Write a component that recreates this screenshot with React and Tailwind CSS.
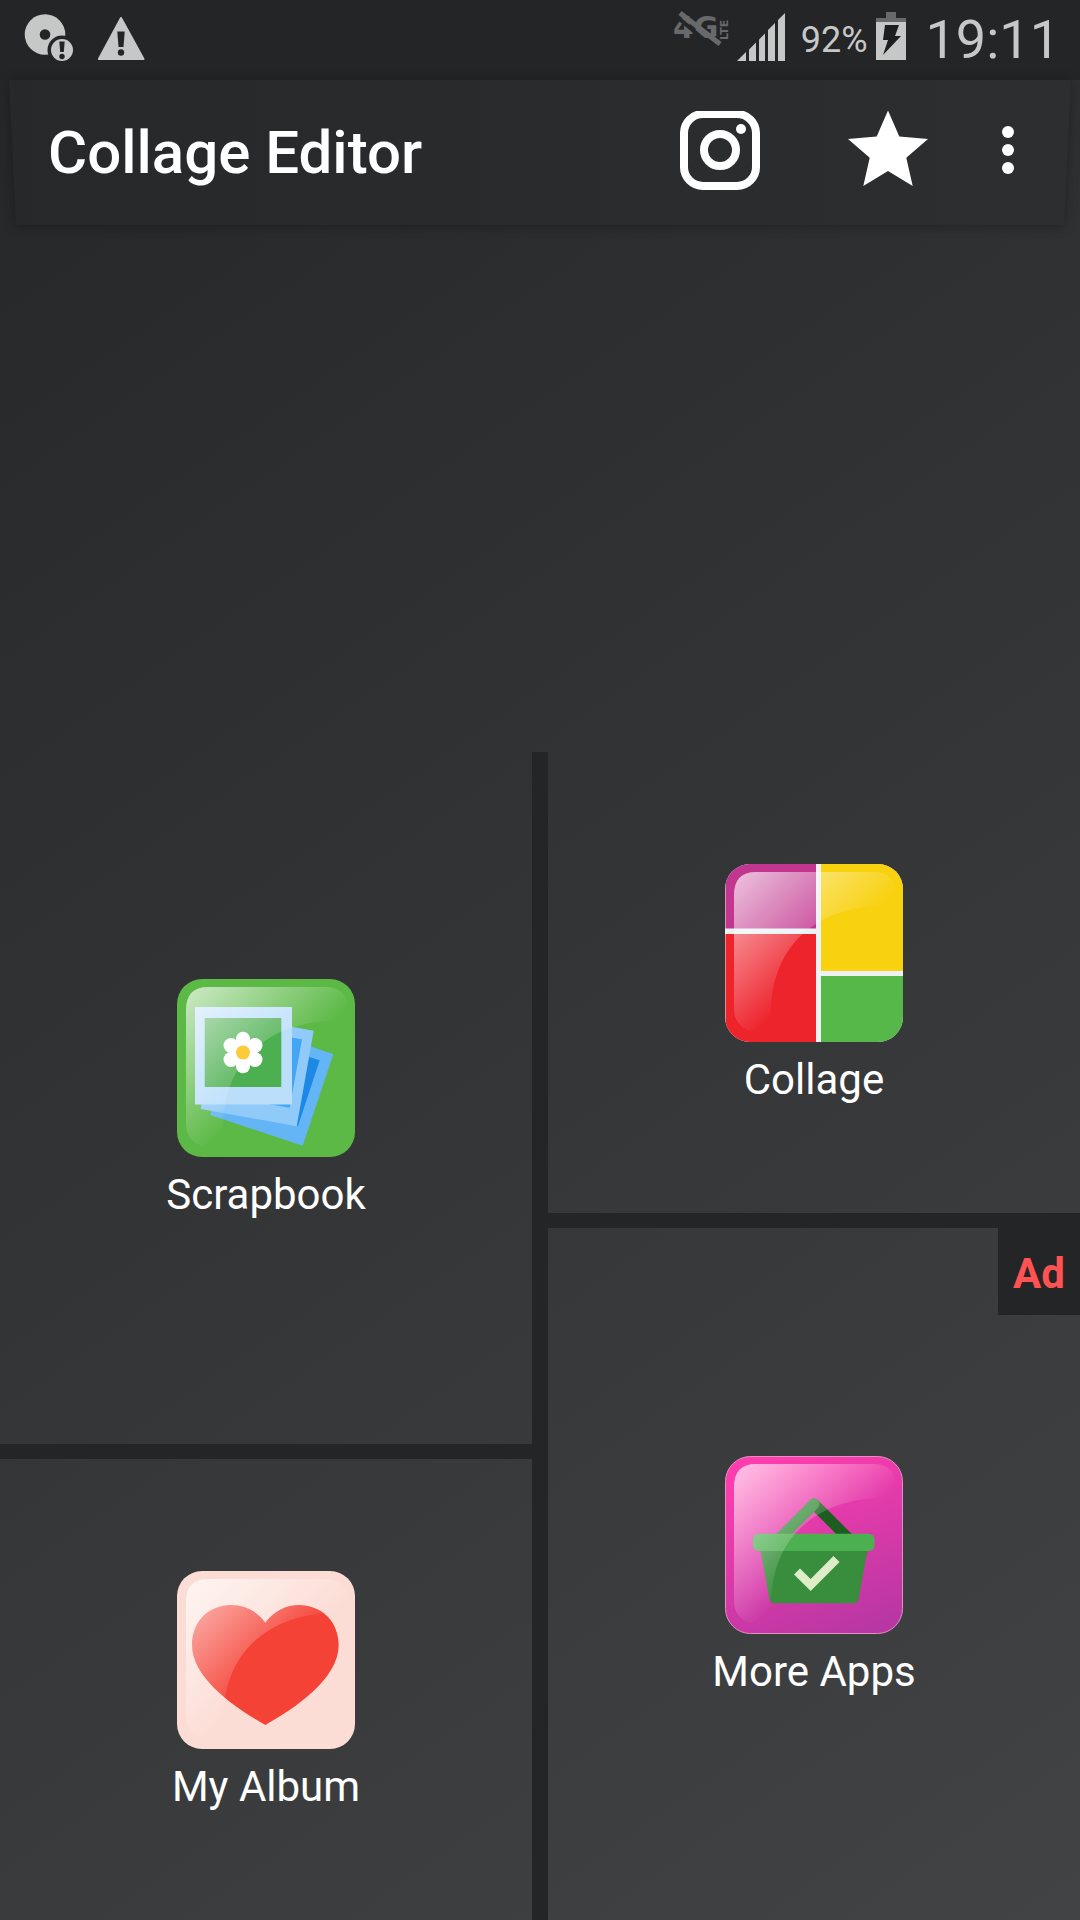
import React from 'react'

// shared glass highlight that sits over every launcher icon
const Gloss = ({ id }) => {
  return (
    <>
      <defs>
        <linearGradient id={id} gradientUnits="userSpaceOnUse" x1="9" y1="8" x2="100" y2="100">
          <stop offset="0" stopColor="#fff" stopOpacity="0.7" />
          <stop offset="1" stopColor="#fff" stopOpacity="0" />
        </linearGradient>
      </defs>
      <path
        d="M31 8H148Q171 8 171 31V42C100 38 46 75 46 150Q38 161 27 168Q9 162 9 145V31Q9 8 31 8Z"
        fill={`url(#${id})`}
      />
    </>
  )
}

const ScrapbookIcon = () => (
  <svg className="size-[178px]" viewBox="0 0 178 178">
    <rect width="178" height="178" rx="25" fill="#5cb946" />
    <path d="M134 67.500L156.300 75.300L125.700 166.700L33.300 136L60 50Z" fill="#64b5f6" />
    <path d="M110 71L142.700 81.300L121 147L90 138Z" fill="#1e88e5" />
    <path d="M40 34L136.700 51.700L119.700 147.300L23.700 130Z" fill="#90caf9" />
    <path d="M100 56L125 60.300L112.700 128.700L80 123Z" fill="#42a5f5" />
    <rect x="18" y="28" width="97" height="97.500" fill="#bbdefb" />
    <rect x="27.700" y="39" width="76.600" height="69" fill="#4caf50" />
    <Gloss id="gloss-scrapbook" />
    <g fill="#fff">
      <circle cx="66" cy="73.500" r="12" />
      <circle cx="66" cy="59.700" r="7" />
      <circle cx="66" cy="87.300" r="7" />
      <circle cx="54" cy="66.500" r="7.500" />
      <circle cx="78" cy="66.500" r="7.500" />
      <circle cx="54" cy="80.500" r="7.500" />
      <circle cx="78" cy="80.500" r="7.500" />
    </g>
    <circle cx="66" cy="73.500" r="7" fill="#fccb3a" />
  </svg>
)

const CollageIcon = () => (
  <svg className="size-[178px]" viewBox="0 0 178 178">
    <defs>
      <clipPath id="collage-clip">
        <rect width="178" height="178" rx="25" />
      </clipPath>
    </defs>
    <g clipPath="url(#collage-clip)">
      <rect width="178" height="178" fill="#edf1f3" />
      <rect x="0.500" width="90.500" height="64.500" fill="#c2368f" />
      <rect x="0.500" y="70" width="90.500" height="108" fill="#ee242d" />
      <rect x="96" width="82" height="107" fill="#f8d10f" />
      <rect x="96" y="112" width="82" height="66" fill="#56b848" />
      <Gloss id="gloss-collage" />
    </g>
  </svg>
)

const AlbumIcon = () => (
  <svg className="size-[178px]" viewBox="0 0 178 178">
    <rect width="178" height="178" rx="25" fill="#fcddd5" />
    <path
      d="M88.300 154C60 138 15 108 15 74C15 50 32 34 54 34C68 34 80 40 88.300 51.700C97 40 109 34 122 34C144 34 161.700 50 161.700 74C161.700 108 117 138 88.300 154Z"
      fill="#f54236"
    />
    <Gloss id="gloss-album" />
  </svg>
)

const MoreAppsIcon = () => (
  <svg className="size-[178px]" viewBox="0 0 178 178">
    <defs>
      <linearGradient id="more-bg" x1="0.300" y1="0" x2="0.700" y2="1">
        <stop offset="0" stopColor="#ff3dae" />
        <stop offset="1" stopColor="#b937a4" />
      </linearGradient>
    </defs>
    <rect x="0.500" y="0.500" width="177" height="177" rx="25" fill="url(#more-bg)" stroke="#e58fc4" />
    <path d="M89 48L122 81" stroke="#1b5e20" strokeWidth="11" strokeLinecap="round" />
    <path d="M89 48L56 81" stroke="#388e3c" strokeWidth="11" strokeLinecap="round" />
    <path d="M35 92H143L133.500 143Q132.500 147.300 128 147.300H49.500Q45.500 147.300 44.500 143Z" fill="#388e3c" />
    <rect x="28" y="77.700" width="121.500" height="17.300" rx="5.500" fill="#4caf50" />
    <path d="M72 115.500L85.700 129L111.500 103" fill="none" stroke="#dcedc8" strokeWidth="8.500" />
    <Gloss id="gloss-more" />
  </svg>
)

const Tile = ({ icon, label, className }) => {
  return (
    <button className={`flex w-full basis-0 flex-col items-center justify-center gap-[17px] ${className}`}>
      {icon}
      <span className="text-[42px] leading-none text-white">{label}</span>
    </button>
  )
}

const StatusBar = () => {
  return (
    <div className="flex h-20 items-start justify-between bg-[#242527] pr-5 pl-6 text-[#c6c8c8]">
      <div className="flex gap-6">
        <svg className="h-[75px] w-[50px]" viewBox="0 0 50 75">
          <circle cx="21" cy="34.500" r="20.300" fill="#c6c8c8" />
          <circle cx="21" cy="34.500" r="5.300" fill="#242527" />
          <circle cx="38" cy="50" r="14.500" fill="#242527" />
          <circle cx="38" cy="50" r="11" fill="#c6c8c8" />
          <path d="M35.300 41.500H40.700L39.800 52H36.200Z" fill="#242527" />
          <circle cx="38" cy="56.500" r="2.700" fill="#242527" />
        </svg>
        <svg className="h-[75px] w-[47px]" viewBox="0 0 47 75">
          <path d="M23 18L45.500 59H0.800Z" fill="#c6c8c8" stroke="#c6c8c8" strokeWidth="2" strokeLinejoin="round" />
          <path d="M19.300 31.500H26.700L25.500 47H20.500Z" fill="#242527" />
          <circle cx="23" cy="52.500" r="3.200" fill="#242527" />
        </svg>
      </div>

      <div className="flex h-[75px] items-center">
        <svg className="mr-2 h-[75px] w-[56px] overflow-visible" viewBox="0 0 56 75">
          <g fill="#68696b" fontFamily="DejaVu Sans" fontWeight="700">
            <text x="0" y="38" fontSize="30">4G</text>
            <text transform="translate(55 40) rotate(-90)" fontSize="11">LTE</text>
          </g>
          <path d="M3 16L42 49" stroke="#242527" strokeWidth="4" />
          <path d="M7 13L47 44" stroke="#68696b" strokeWidth="5" />
        </svg>
        <svg className="h-[75px] w-12" viewBox="0 0 48 75" fill="#c6c8c8">
          <path d="M0 61L9 52V61Z" />
          <path d="M12 49.500L19 42.500V61H12Z" />
          <path d="M22 39.500L28 33.500V61H22Z" />
          <path d="M31 30L38 23V61H31Z" />
          <path d="M41 20L48 13V61H41Z" />
        </svg>
        <span className="ml-4 pt-1 text-[36px] leading-none">92%</span>
        <svg className="ml-2 h-[75px] w-[30px]" viewBox="0 0 30 75">
          <path d="M10 12H20V18H30V22H0V18H10Z" fill="#68696b" />
          <rect y="22" width="30" height="38" fill="#c6c8c8" />
          <path d="M9 25H23L19 36H25L7 55L12 40H7Z" fill="#1d1e1f" />
        </svg>
        <span className="ml-5 pt-1 text-[54px] leading-none">19:11</span>
      </div>
    </div>
  )
}

const Header = () => {
  return (
    <header className="drop-shadow-[0_1px_6px_rgba(0,0,0,0.3)]">
      <div className="flex h-[145px] items-center bg-linear-to-r from-[#27282a] to-[#2d2e2f] pr-[60px] pl-12 text-white [clip-path:polygon(9px_0,calc(100%-9px)_0,calc(100%-16px)_100%,16px_100%)]">
        <h1 className="flex-1 text-[60px] leading-none font-medium">Collage Editor</h1>
        <button aria-label="Instagram">
          <svg className="size-[84px]" viewBox="0 1 84 84" fill="none" stroke="#fff" strokeWidth="8">
            <rect x="6" y="4" width="72" height="72" rx="19" />
            <circle cx="42" cy="40" r="16" />
            <circle cx="63" cy="19" r="5" fill="#fff" stroke="none" />
          </svg>
        </button>
        <button aria-label="Rate" className="ml-[84px]">
          <svg className="size-[84px]" viewBox="0 1 84 84" fill="#fff">
            <path d="M42 0.500L53.300 26.500L82 29L60.300 47.700L66.700 76L42 61L17.300 76L23.700 47.700L2 29L30.700 26.500Z" />
          </svg>
        </button>
        <button aria-label="More options" className="ml-[54px]">
          <svg className="h-[84px] w-9" viewBox="0 1 36 84" fill="#fff">
            <circle cx="24" cy="22" r="6" />
            <circle cx="24" cy="40" r="6" />
            <circle cx="24" cy="58" r="6" />
          </svg>
        </button>
      </div>
    </header>
  )
}

const App = () => {
  return (
    <div className="flex min-h-screen flex-col overflow-hidden bg-[linear-gradient(145deg,#242628,#424344)] font-['Roboto',sans-serif]">
      <StatusBar />
      <Header />

      <main className="flex flex-1 flex-col pt-[527px]">
        <div className="flex flex-1">
          <div className="flex flex-1 flex-col">
            <Tile className="grow-3" icon={<ScrapbookIcon />} label="Scrapbook" />
            <div className="h-[15px] bg-[#242527]"></div>
            <Tile className="grow-2" icon={<AlbumIcon />} label="My Album" />
          </div>

          <div className="w-4 bg-[#242527]"></div>

          <div className="flex flex-1 flex-col">
            <Tile className="grow-2" icon={<CollageIcon />} label="Collage" />
            <div className="h-[15px] bg-[#242527]"></div>
            <div className="relative flex grow-3 basis-0">
              <Tile className="grow" icon={<MoreAppsIcon />} label="More Apps" />
              <span className="absolute top-0 right-0 flex h-[87px] w-[82px] items-center justify-center bg-[#242527] pt-1 text-[42px] leading-none font-bold text-[#ff5252]">
                Ad
              </span>
            </div>
          </div>
        </div>
      </main>
    </div>
  )
}

export default App
